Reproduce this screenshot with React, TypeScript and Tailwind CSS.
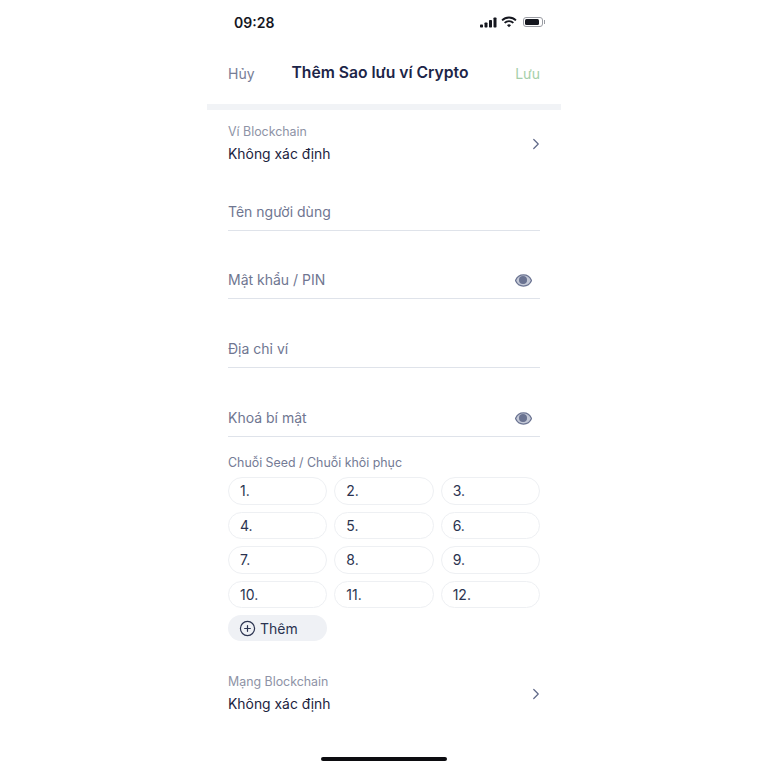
import { Eye, ChevronRight, CirclePlus } from 'lucide-react';

const seeds = ['1.', '2.', '3.', '4.', '5.', '6.', '7.', '8.', '9.', '10.', '11.', '12.'];

function SelectRow({ label, className }: { label: string; className: string }) {
  return (
    <div className={`flex items-center justify-between ${className}`}>
      <div>
        <div className="text-[12.4px] leading-[16px] text-[#8e93a6]">{label}</div>
        <div className="mt-[4px] text-[13.9px] leading-[20px] text-[#1c2340]">Không xác định</div>
      </div>
      <ChevronRight size={18} strokeWidth={1.6} className="-mr-[5px] text-[#5f6888]" />
    </div>
  );
}

function Field({ label, hasEye, className }: { label: string; hasEye?: boolean; className: string }) {
  return (
    <div className={`flex h-[32px] items-center justify-between border-b border-[#dfe3ea] pb-[5px] ${className}`}>
      <span className="text-[14px] leading-[20px] text-[#6f7691]">{label}</span>
      {hasEye && <EyeIcon />}
    </div>
  );
}

function EyeIcon() {
  return (
    <span className="relative mr-[9px] flex h-[16px] w-[16px] items-center justify-center">
      <Eye size={19} strokeWidth={1.6} className="shrink-0 fill-[#c3c8d6] text-[#6a7391]" />
      <span className="absolute h-[8px] w-[8px] rounded-full bg-[#6a7391]" />
    </span>
  );
}

export default function App() {
  return (
    <div className="flex min-h-[768px] justify-center bg-white font-['Inter',sans-serif]">
      <div className="h-[768px] w-[354px] overflow-hidden">
        <div className="flex h-[44px] items-center justify-between pl-[27px] pr-[16px]">
          <span className="text-[14px] font-semibold text-[#15171f]">09:28</span>
          <div className="flex items-center gap-[4px]">
            <svg width="17" height="11" viewBox="0 0 17 11" fill="#15171f">
              <rect x="0" y="7.5" width="3" height="3" rx="0.7" />
              <rect x="4.5" y="5.5" width="3" height="5" rx="0.7" />
              <rect x="9" y="3" width="3" height="7.5" rx="0.7" />
              <rect x="13.5" y="0.5" width="3" height="10" rx="0.7" />
            </svg>
            <svg width="16" height="12" viewBox="0 0 15 11" fill="none" stroke="#15171f" strokeWidth="1.7">
              <path d="M1 4a9.2 9.2 0 0 1 13 0" />
              <path d="M3.4 6.4a5.8 5.8 0 0 1 8.2 0" />
              <path d="M7.5 10.5 5.6 8.6a2.7 2.7 0 0 1 3.8 0z" fill="#15171f" stroke="none" />
            </svg>
            <div className="ml-[2px] flex items-center">
              <div className="h-[10px] w-[20px] rounded-[3px] border border-[#9a9ca3] p-[1px]">
                <div className="h-full w-[14px] rounded-[1.5px] bg-[#15171f]" />
              </div>
              <div className="ml-[1px] h-[4px] w-[1px] bg-[#9a9ca3]" />
            </div>
          </div>
        </div>

        <div className="flex h-[60px] items-center justify-between px-[21px] pb-[2px]">
          <span className="w-[40px] text-[14px] text-[#767d96]">Hủy</span>
          <span className="text-[15.7px] font-semibold text-[#1c2548]">Thêm Sao lưu ví Crypto</span>
          <span className="w-[48px] text-right text-[14px] text-[#a5cfa9]">Lưu</span>
        </div>
        <div className="h-[6px] bg-[#f1f3f6]" />

        <div className="px-[21px]">
          <SelectRow label="Ví Blockchain" className="mt-[14px]" />
          <Field label="Tên người dùng" className="mt-[35px]" />
          <Field label="Mật khẩu / PIN" hasEye className="mt-[36px]" />
          <Field label="Địa chỉ ví" className="mt-[37px]" />
          <Field label="Khoá bí mật" hasEye className="mt-[37px]" />

          <div className="mt-[18px] text-[12.4px] leading-[16px] text-[#747b95]">Chuỗi Seed / Chuỗi khôi phục</div>
          <div className="mt-[6px] grid grid-cols-3 gap-x-[7px] gap-y-[7px]">
            {seeds.map((seed) => (
              <div
                key={seed}
                className="flex h-[27.5px] items-center rounded-full border border-[#eef0f3] pl-[11px] text-[14px] text-[#2b3350]"
              >
                {seed}
              </div>
            ))}
          </div>
          <div className="mt-[7px] flex h-[26px] w-[99px] items-center gap-[4px] rounded-full bg-[#eff1f5] pl-[11px] text-[14px] text-[#2b3350]">
            <CirclePlus size={17} strokeWidth={1.7} />
            Thêm
          </div>

          <SelectRow label="Mạng Blockchain" className="mt-[33px]" />
        </div>

        <div className="mx-auto mt-[43px] h-[4px] w-[126px] rounded-full bg-[#0c0c10]" />
      </div>
    </div>
  );
}
